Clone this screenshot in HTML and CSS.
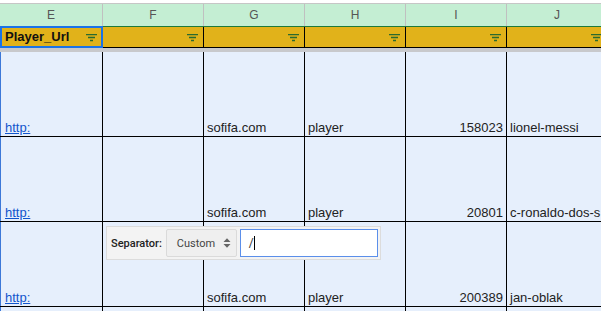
FILE: index.html
```html
<!DOCTYPE html>
<html>
<head>
<meta charset="utf-8">
<link rel="stylesheet" href="styles.css">
</head>
<body>
<div class="sheet">
  <div class="row colhead">
    <div class="c">E</div><div class="c">F</div><div class="c">G</div><div class="c">H</div><div class="c">I</div><div class="c last">J</div>
  </div>
  <div class="row filters">
    <div class="c sel"><span class="name">Player_Url</span><svg class="fi" width="11" height="8" viewBox="0 0 11 8"><path d="M0 0.5h11M2 3.5h7M4 6.5h3" stroke="#2b6a2f" stroke-width="1.3"/></svg></div>
    <div class="c"><svg class="fi" width="11" height="8" viewBox="0 0 11 8"><path d="M0 0.5h11M2 3.5h7M4 6.5h3" stroke="#2b6a2f" stroke-width="1.3"/></svg></div>
    <div class="c"><svg class="fi" width="11" height="8" viewBox="0 0 11 8"><path d="M0 0.5h11M2 3.5h7M4 6.5h3" stroke="#2b6a2f" stroke-width="1.3"/></svg></div>
    <div class="c"><svg class="fi" width="11" height="8" viewBox="0 0 11 8"><path d="M0 0.5h11M2 3.5h7M4 6.5h3" stroke="#2b6a2f" stroke-width="1.3"/></svg></div>
    <div class="c"><svg class="fi" width="11" height="8" viewBox="0 0 11 8"><path d="M0 0.5h11M2 3.5h7M4 6.5h3" stroke="#2b6a2f" stroke-width="1.3"/></svg></div>
    <div class="c last"><svg class="fi" width="11" height="8" viewBox="0 0 11 8"><path d="M0 0.5h11M2 3.5h7M4 6.5h3" stroke="#2b6a2f" stroke-width="1.3"/></svg></div>
  </div>
  <div class="freeze"></div>
  <div class="row data">
    <div class="c first"><a href="#">http:</a></div><div class="c"></div><div class="c">sofifa.com</div><div class="c">player</div><div class="c num">158023</div><div class="c last">lionel-messi</div>
  </div>
  <div class="row data">
    <div class="c first"><a href="#">http:</a></div><div class="c"></div><div class="c">sofifa.com</div><div class="c">player</div><div class="c num">20801</div><div class="c last">c-ronaldo-dos-s</div>
  </div>
  <div class="row data">
    <div class="c first"><a href="#">http:</a></div><div class="c"></div><div class="c">sofifa.com</div><div class="c">player</div><div class="c num">200389</div><div class="c last">jan-oblak</div>
  </div>
  <div class="row data tail">
    <div class="c first"></div><div class="c"></div><div class="c"></div><div class="c"></div><div class="c"></div><div class="c last"></div>
  </div>

  <div class="popup">
    <span class="lbl">Separator:</span>
    <div class="select"><span>Custom</span><svg width="8" height="12" viewBox="0 0 8 12"><path d="M0.5 5L4 1.2 7.5 5z M0.5 7L4 10.8 7.5 7z" fill="#666"/></svg></div>
    <div class="input"><span class="val">/</span><span class="caret"></span></div>
  </div>
</div>
</body>
</html>
```

FILE: styles.css
```css
html, body {
  margin: 0;
  padding: 0;
  background: #ffffff;
  overflow: hidden;
}
.sheet {
  position: relative;
  width: 601px;
  height: 311px;
  padding-top: 3px;
  box-sizing: border-box;
  overflow: hidden;
  font-family: "Liberation Sans", Arial, sans-serif;
  font-size: 13px;
  color: #222;
}
.row {
  display: flex;
  width: 610px;
}
.c {
  box-sizing: border-box;
  width: 101px;
  flex: none;
  border-right: 1px solid #000;
  overflow: hidden;
  white-space: nowrap;
}
.c:first-child { width: 103px; }
.c.last { width: 101px; }

.colhead {
  height: 24px;
  background: #c4eed3;
  border-top: 1px solid #c6c6c6;
  border-bottom: 1px solid #1f7a3a;
  box-sizing: border-box;
}
.colhead .c {
  border-right: 1px solid #c0c0c0;
  text-align: center;
  line-height: 22px;
  font-size: 12px;
  color: #555;
}
.filters {
  height: 21px;
  background: #e1b21a;
  border-bottom: 1px solid #000;
  box-sizing: border-box;
}
.filters .c {
  display: flex;
  align-items: center;
  justify-content: flex-end;
  padding-right: 5px;
  height: 20px;
}
.filters .c.last {
  justify-content: flex-start;
  padding-left: 84px;
  padding-right: 0;
}
.filters .sel {
  border: 2px solid #1a73e8;
  height: 22px;
  margin-top: -1px;
  justify-content: space-between;
  padding-left: 3px;
  padding-right: 4px;
}
.name {
  font-weight: bold;
  font-size: 13px;
  color: #111;
  line-height: 18px;
}
.fi { display: block; margin-top: 2px; flex: none; }

.freeze {
  height: 4px;
  background: #c8c9cc;
}
.data {
  height: 85px;
  background: #e6effc;
  border-bottom: 1px solid #000;
  box-sizing: border-box;
}
.data .c {
  display: flex;
  align-items: flex-end;
  padding: 0 3px 1px 3px;
  height: 84px;
  font-size: 13px;
  color: #222;
  line-height: 15px;
}
.data .c.first {
  border-left: 1px solid #3c78d8;
  padding-left: 4px;
}
.data .c.num { justify-content: flex-end; }
.data a {
  color: #1155cc;
  text-decoration: underline;
}
.tail { border-bottom: none; }

.popup {
  position: absolute;
  left: 106px;
  top: 226px;
  width: 275px;
  height: 34px;
  box-sizing: border-box;
  background: #f3f3f3;
  border: 1px solid #dcdcdc;
  display: flex;
  align-items: center;
  padding-left: 4px;
  font-family: "Roboto", "Liberation Sans", sans-serif;
}
.lbl {
  font-size: 11px;
  font-weight: 500;
  color: #222;
  margin-right: 4px;
}
.select {
  box-sizing: border-box;
  width: 71px;
  height: 28px;
  background: #efefef;
  border: 1px solid #dadada;
  border-radius: 2px;
  display: flex;
  align-items: center;
  justify-content: space-between;
  padding: 0 5px 0 10px;
  font-size: 11px;
  color: #444;
  margin-right: 3px;
}
.input {
  box-sizing: border-box;
  width: 138px;
  height: 28px;
  background: #fff;
  border: 1px solid #5b8fea;
  display: flex;
  align-items: center;
  padding-left: 8px;
  font-size: 12px;
  color: #333;
}
.caret {
  display: inline-block;
  width: 1px;
  height: 14px;
  background: #000;
}
```
